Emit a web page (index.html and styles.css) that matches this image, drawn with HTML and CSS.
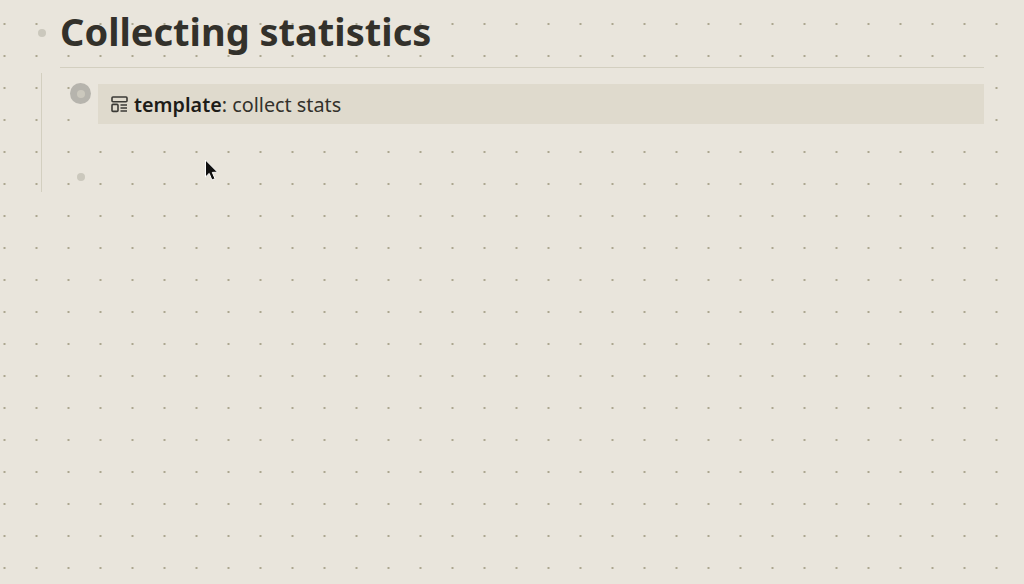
FILE: index.html
```html
<!DOCTYPE html>
<html lang="en">
<head>
  <meta charset="UTF-8">
  <title>Collecting statistics</title>
  <link rel="stylesheet" href="styles.css">
</head>
<body>
  <div class="page">
    <div class="title-row">
      <span class="dot"></span>
      <h1 class="title">Collecting statistics</h1>
    </div>
    <div class="children">
      <div class="block">
        <span class="dot-wrap"><span class="dot-big"><span class="dot-inner"></span></span></span>
        <div class="band">
          <svg class="band-icon" width="17" height="17" viewBox="0 0 17 17" fill="none" stroke="#3b3a36" stroke-width="1.6">
            <rect x="1" y="1" width="15" height="4.8" rx="1"/>
            <rect x="1" y="8.4" width="6" height="7" rx="1"/>
            <path d="M9.5 9h6.5M9.5 12h6.5M9.5 15h6.5"/>
          </svg>
          <span class="band-text"><b>template</b>: collect stats</span>
        </div>
      </div>
      <div class="empty-block">
        <span class="dot-small"></span>
      </div>
    </div>
  </div>

  <!-- mouse pointer -->
  <svg class="cursor" width="15" height="23" viewBox="0 0 15 23">
    <path d="M1.5 1 L1.5 18 L5.2 14.4 L7.9 21 L11 19.7 L8.3 13.4 L13.6 13.2 Z" fill="#111" stroke="#fff" stroke-width="1"/>
  </svg>
</body>
</html>
```

FILE: styles.css
```css
html, body {
  margin: 0;
  height: 100%;
  overflow: hidden;
}

body {
  background-color: #e9e5dc;
  background-image: radial-gradient(circle at center, #aca790 0, #aca790 .9px, transparent 1.5px);
  background-size: 32px 32px;
  background-position: -11.5px 8px;
  font-family: "Noto Sans", "Roboto", sans-serif;
  color: #33312b;
}

.page {
  padding: 0 40px 0 36px;
}

.title-row {
  display: flex;
  align-items: center;
  height: 68px;
}

.dot {
  width: 8px;
  height: 8px;
  margin: 0 0 3px 2px;
  border-radius: 50%;
  background-color: #cbc8bd;
  flex: none;
}

.title {
  flex: 1;
  margin: 0 0 0 14px;
  height: 68px;
  line-height: 62px;
  font-size: 38px;
  font-weight: 700;
  box-sizing: border-box;
  border-bottom: 1px solid #d3cfc0;
}

.children {
  margin: 5px 0 0 5px;
  height: 119px;
  border-left: 1px solid #d3cfc0;
}

.block {
  display: flex;
  padding-top: 11px;
}

.dot-wrap {
  width: 56px;
  padding-left: 28px;
  box-sizing: border-box;
  flex: none;
}

.dot-big {
  display: flex;
  align-items: center;
  justify-content: center;
  width: 21px;
  height: 21px;
  margin-top: -1px;
  border-radius: 50%;
  background-color: #b6b4ad;
}

.dot-inner {
  width: 8px;
  height: 8px;
  border-radius: 50%;
  background-color: #cbc8bd;
}

.band {
  flex: 1;
  display: flex;
  align-items: center;
  height: 40px;
  padding-left: 13px;
  background-color: #dfdacd;
  font-size: 19.8px;
}

.band-icon {
  margin-right: 6px;
  flex: none;
}

.band-text {
  padding-top: 1px;
}

.band-text b {
  font-weight: 600;
  color: #1d1c18;
}

.empty-block {
  padding: 49px 0 0 35px;
}

.dot-small {
  display: block;
  width: 8px;
  height: 8px;
  border-radius: 50%;
  background-color: #cbc8bd;
}

.cursor {
  position: absolute;
  left: 204px;
  top: 159px;
}
```
